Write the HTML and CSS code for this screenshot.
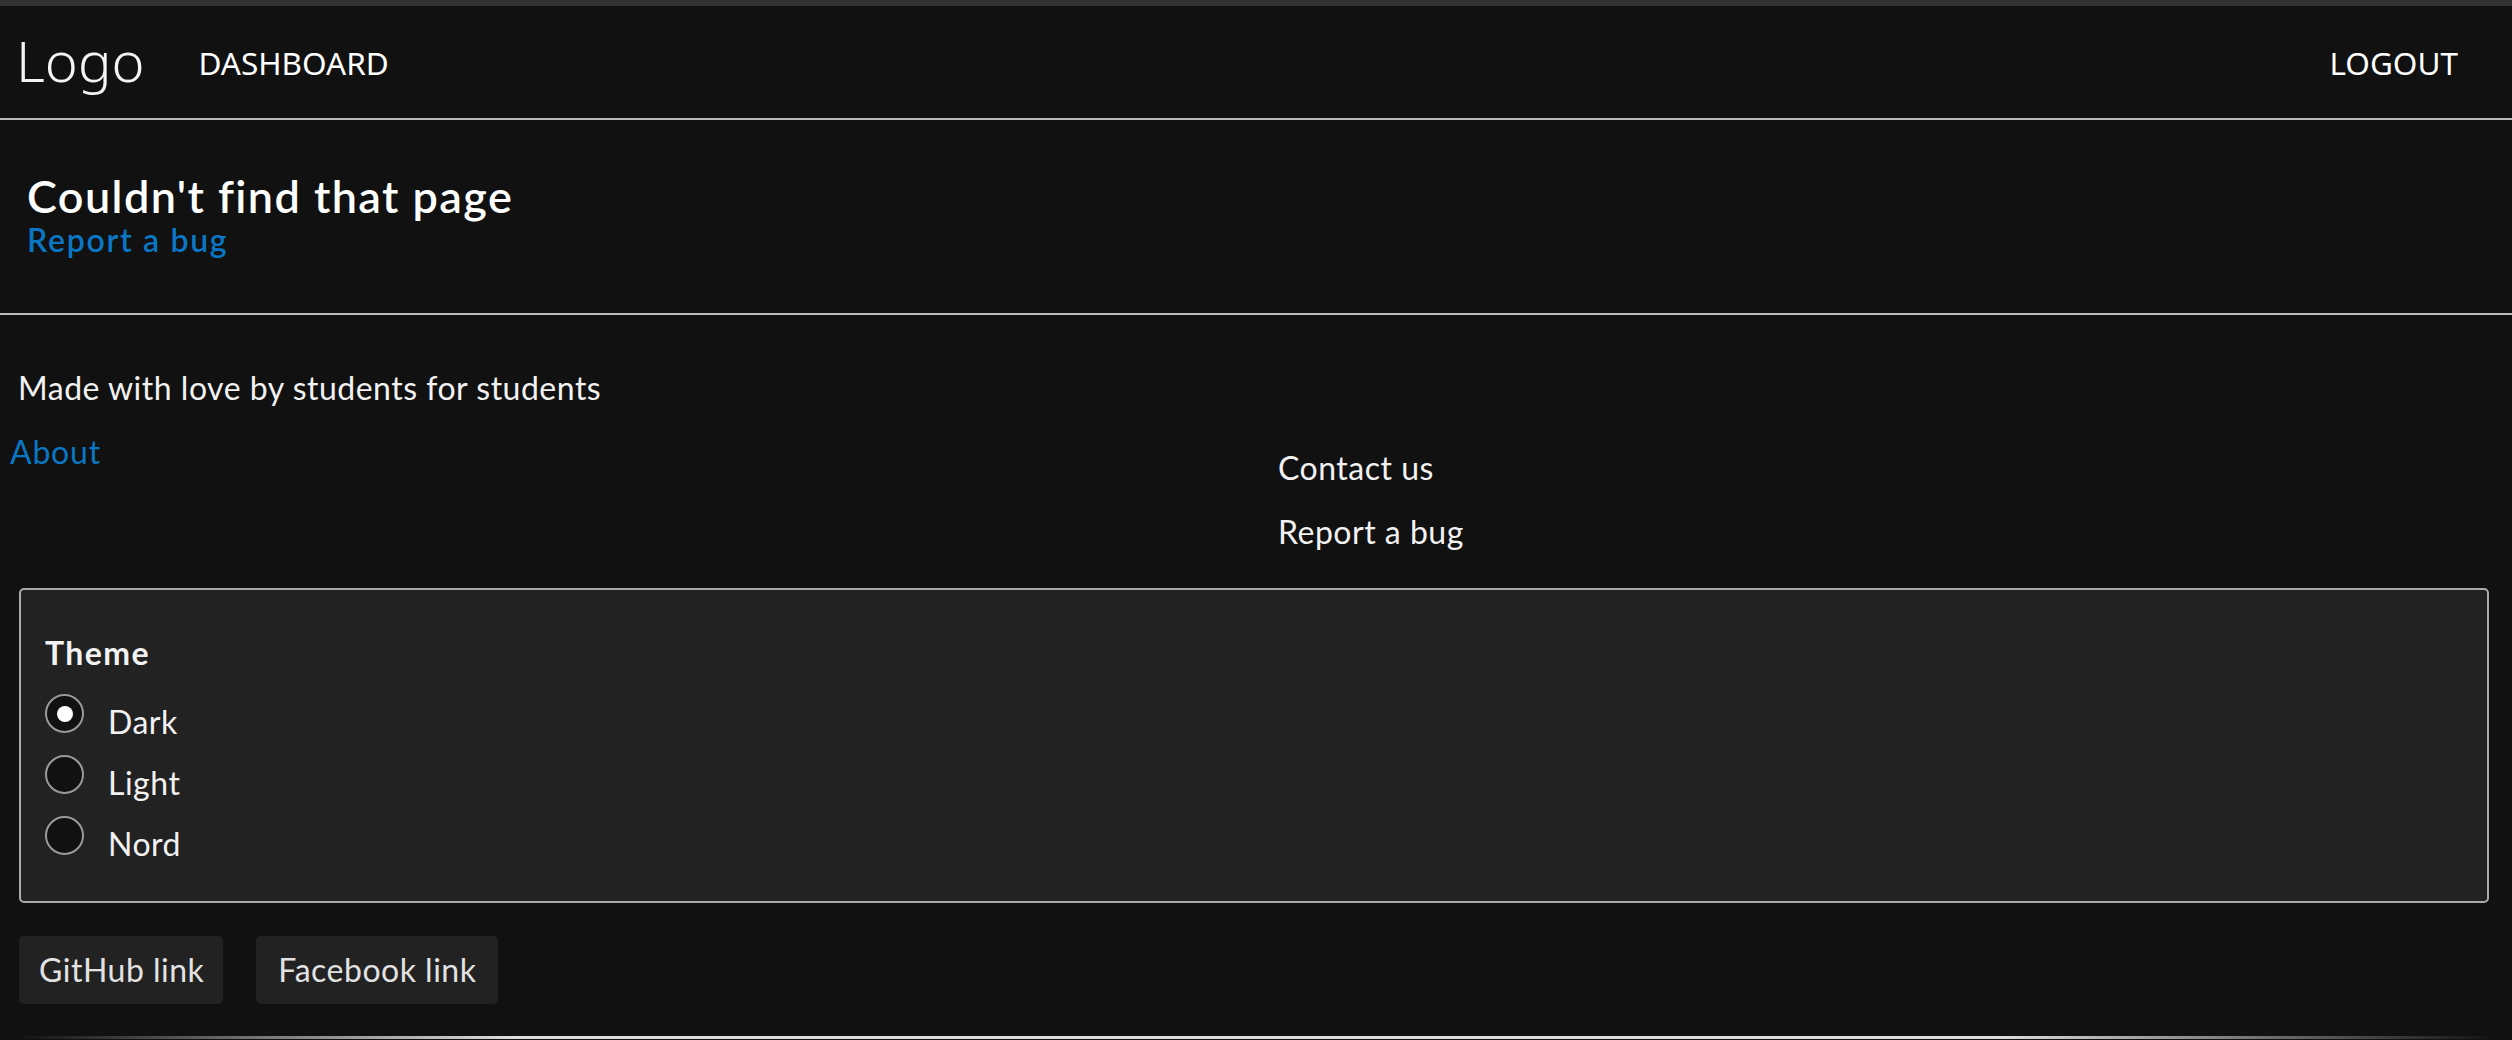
FILE: index.html
```html
<!DOCTYPE html>
<html lang="en">
<head>
<meta charset="utf-8">
<title>Couldn't find that page</title>
<link rel="stylesheet" href="styles.css">
</head>
<body>
<div class="topbar"></div>
<nav class="nav">
  <a class="brand" href="#">Logo</a>
  <a class="nav-link" href="#">DASHBOARD</a>
  <span class="spacer"></span>
  <a class="nav-link logout" href="#">LOGOUT</a>
</nav>
<section class="notfound">
  <h1 class="title">Couldn't find that page</h1>
  <a class="bug-link" href="#">Report a bug</a>
</section>
<footer class="footer">
  <p class="tagline">Made with love by students for students</p>
  <div class="footer-cols">
    <div class="col-left">
      <a class="about" href="#">About</a>
    </div>
    <ul class="col-right">
      <li>Contact us</li>
      <li>Report a bug</li>
    </ul>
  </div>
  <div class="theme-box">
    <div class="theme-title">Theme</div>
    <label class="radio-row"><span class="radio checked"></span><span class="radio-label">Dark</span></label>
    <label class="radio-row"><span class="radio"></span><span class="radio-label">Light</span></label>
    <label class="radio-row"><span class="radio"></span><span class="radio-label">Nord</span></label>
  </div>
  <div class="buttons">
    <a class="btn" href="#">GitHub link</a>
    <a class="btn btn-wide" href="#">Facebook link</a>
  </div>
  <div class="rule"></div>
</footer>
</body>
</html>
```
FILE: styles.css
```css
html, body {
  margin: 0;
  padding: 0;
}
body {
  background: #111111;
  color: #f2f2f2;
  font-family: "Lato", "Noto Sans", sans-serif;
  font-size: 32px;
  letter-spacing: 0.5px;
  line-height: 40px;
}
a {
  text-decoration: none;
}
.topbar {
  height: 6px;
  background: #333333;
}
.nav {
  display: flex;
  align-items: center;
  height: 112px;
  border-bottom: 2px solid #bbbbbb;
  font-family: "Noto Sans", sans-serif;
  letter-spacing: 0;
  color: #ffffff;
}
.brand {
  color: #f4f4f4;
  font-size: 56px;
  font-weight: 300;
  margin-left: 16px;
  line-height: 1;
  margin-top: -4px;
}
.nav-link {
  color: #ffffff;
  font-size: 31.5px;
  margin-left: 54px;
  line-height: 1;
  margin-top: 2px;
}
.spacer {
  flex: 1;
}
.logout {
  margin-right: 54px;
}
.notfound {
  padding: 52px 24px 53px 27px;
  border-bottom: 2px solid #bbbbbb;
}
.title {
  margin: 0;
  font-size: 45px;
  line-height: 48px;
  font-weight: 600;
  letter-spacing: 1.4px;
  color: #ffffff;
}
.bug-link {
  display: block;
  color: #0a76c4;
  font-weight: 600;
  letter-spacing: 1.7px;
}
.footer {
  padding-top: 53px;
}
.tagline {
  margin: 0 0 24px 18px;
}
.footer-cols {
  display: grid;
  grid-template-columns: 1fr 1fr;
}
.col-left {
  padding-left: 10px;
}
.about {
  color: #0a76c4;
  letter-spacing: 0.8px;
}
.col-right {
  list-style: none;
  margin: 0;
  padding: 16px 0 0 22px;
  display: flex;
  flex-direction: column;
  gap: 24px;
}
.theme-box {
  margin: 36px 23px 0 19px;
  border: 2px solid #aaaaaa;
  border-radius: 5px;
  background: #222222;
  padding: 43px 24px 37px;
}
.theme-title {
  font-weight: 700;
  letter-spacing: 1.4px;
  margin-bottom: 21px;
}
.radio-row {
  display: flex;
  align-items: flex-start;
  margin-bottom: 13px;
}
.radio-row:last-child {
  margin-bottom: 0;
}
.radio {
  box-sizing: border-box;
  width: 39px;
  height: 39px;
  border: 2px solid #9a9a9a;
  border-radius: 50%;
  background: #111111;
  display: flex;
  align-items: center;
  justify-content: center;
  flex: none;
}
.radio.checked::after {
  content: "";
  width: 16px;
  height: 16px;
  border-radius: 50%;
  background: #ffffff;
}
.radio-label {
  margin-left: 24px;
  padding-top: 8px;
}
.buttons {
  display: flex;
  gap: 33px;
  margin: 33px 0 0 19px;
}
.btn {
  display: flex;
  align-items: center;
  height: 68px;
  padding: 0 19px 0 20px;
  background: #222222;
  border-radius: 5px;
  color: #e2e2e2;
  font-size: 32px;
}
.btn-wide {
  padding: 0 22px 0 22px;
}
.rule {
  margin: 32px 16px 0;
  height: 3px;
  background: linear-gradient(to right, rgba(221,221,221,0), #dddddd 20%, #dddddd 80%, rgba(221,221,221,0));
}
```
